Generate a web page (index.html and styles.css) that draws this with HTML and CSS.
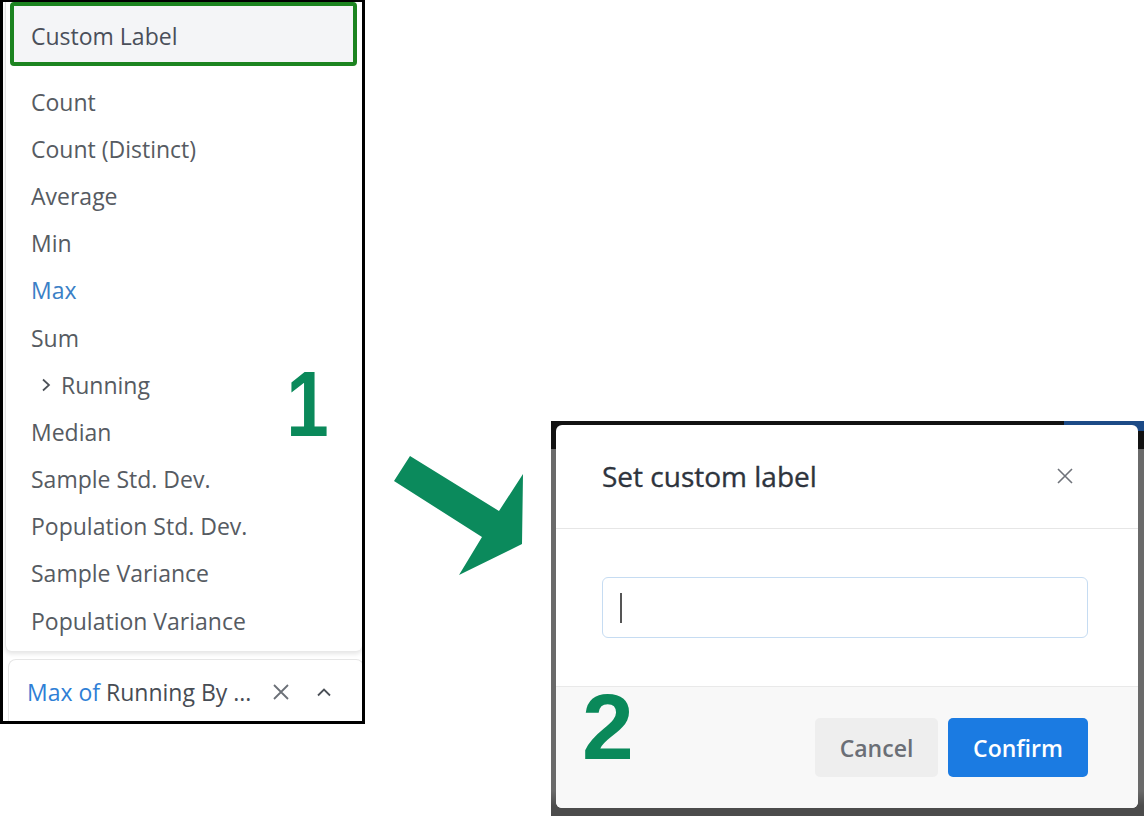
FILE: index.html
```html
<!DOCTYPE html>
<html>
<head>
<meta charset="utf-8">
<link rel="stylesheet" href="styles.css">
</head>
<body>
<div class="canvas">
  <div class="shot1">
    <div class="card">
      <div class="sel">Custom Label</div>
      <ul class="items">
        <li>Count</li>
        <li>Count (Distinct)</li>
        <li>Average</li>
        <li>Min</li>
        <li class="active">Max</li>
        <li>Sum</li>
        <li class="sub"><svg class="chev" width="12" height="18" viewBox="0 0 12 18"><path d="M3 3.5 L9 9 L3 14.5" fill="none" stroke="#4b5057" stroke-width="1.7"/></svg>Running</li>
        <li>Median</li>
        <li>Sample Std. Dev.</li>
        <li>Population Std. Dev.</li>
        <li>Sample Variance</li>
        <li>Population Variance</li>
      </ul>
    </div>
    <div class="field">
      <span class="ftext"><span class="blue">Max of</span> Running By ...</span>
      <svg class="fx" width="18" height="18" viewBox="0 0 18 18"><path d="M2 2 L16 16 M16 2 L2 16" stroke="#6b7077" stroke-width="1.8" fill="none"/></svg>
      <svg class="fup" width="16" height="10" viewBox="0 0 16 10"><path d="M2 8.5 L8 2.5 L14 8.5" stroke="#4b5057" stroke-width="1.8" fill="none"/></svg>
    </div>
  </div>

  <div class="num num1">1</div>

  <svg class="arrow" width="140" height="130" viewBox="390 450 140 130">
    <polygon points="410,456 499,511 523,474 522,544 459,575 482,537 394,481" fill="#0b8a5c"/>
  </svg>

  <div class="shot2">
    <div class="modal">
      <div class="mhead">
        <span class="mtitle">Set custom label</span>
        <svg class="mclose" width="18" height="18" viewBox="0 0 18 18"><path d="M2 2 L16 16 M16 2 L2 16" stroke="#6f737a" stroke-width="1.6" fill="none"/></svg>
      </div>
      <div class="mbody">
        <div class="input"><span class="caret"></span></div>
      </div>
      <div class="mfoot">
        <button class="btn cancel">Cancel</button>
        <button class="btn confirm">Confirm</button>
      </div>
    </div>
  </div>

  <div class="num num2">2</div>
</div>
</body>
</html>
```

FILE: styles.css
```css
* { box-sizing: border-box; }
html, body { margin: 0; padding: 0; background: #fff; }
body { font-family: "Open Sans", "Noto Sans", sans-serif; }

.canvas {
  position: relative;
  width: 1144px;
  height: 835px;
  overflow: hidden;
  background: #fff;
}

/* ---------- left screenshot ---------- */
.shot1 {
  position: absolute;
  left: 0;
  top: 0;
  width: 365px;
  height: 724px;
  border: 3px solid #000;
  border-top-width: 2px;
  background: #fff;
  overflow: hidden;
  display: flex;
  flex-direction: column;
}
.card {
  margin-left: 2px;
  width: 357px;
  height: 649px;
  border-left: 1px solid #e4e4e4;
  border-bottom-left-radius: 6px;
  border-bottom-right-radius: 6px;
  box-shadow: 0 3px 4px rgba(0, 0, 0, 0.10);
  background: #fff;
  display: flex;
  flex-direction: column;
}
.sel {
  margin-left: 4px;
  width: 347px;
  height: 64px;
  border: 4px solid #1c8420;
  border-radius: 4px;
  background: #f4f5f7;
  padding-left: 17px;
  padding-top: 5px;
  font-size: 23px;
  line-height: 51px;
  color: #4a4f5a;
}
.items {
  list-style: none;
  margin: 12.5px 0 0 0;
  padding: 0;
}
.items li {
  height: 47.2px;
  line-height: 47px;
  padding-left: 25px;
  font-size: 23px;
  color: #565b62;
  display: flex;
  align-items: center;
}
.items li.active { color: #3a80c6; }
.items li.sub { padding-left: 34px; }
.chev { margin-right: 9px; }

.field {
  margin-top: 8px;
  margin-left: 5px;
  width: 356px;
  flex: 1;
  border: 1px solid #e6e6e6;
  border-bottom: none;
  border-radius: 8px 8px 0 0;
  display: flex;
  align-items: center;
  padding-left: 18px;
  padding-top: 2px;
  font-size: 23px;
  color: #474c54;
}
.ftext { white-space: nowrap; }
.blue { color: #2f7fd6; }
.fx { margin-left: 21px; }
.fup { margin-left: 26px; }

/* ---------- numbers & arrow ---------- */
.num {
  position: absolute;
  font-family: "Liberation Sans", Arial, sans-serif;
  font-weight: 700;
  font-size: 93px;
  line-height: 93px;
  color: #0a895a;
}
.num1 { left: 282px; top: 358px; transform: scaleX(0.82); transform-origin: 24px 0; }
.num2 { left: 582px; top: 681px; }

.arrow {
  position: absolute;
  left: 390px;
  top: 450px;
}

/* ---------- right screenshot ---------- */
.shot2 {
  position: absolute;
  left: 551px;
  top: 421px;
  width: 593px;
  height: 395px;
  background: linear-gradient(to bottom, #121212 0, #121212 28px, #6a6a6a 28px, #6a6a6a 370px, #4c4c4c 385px);
  padding: 4px 6px 0 5px;
}
.shot2::before {
  content: "";
  position: absolute;
  right: 0;
  top: 0;
  width: 80px;
  height: 10px;
  background: #1c4a86;
}
.modal {
  position: relative;
  width: 582px;
  height: 383px;
  background: #fff;
  border-radius: 6px;
  overflow: hidden;
  display: flex;
  flex-direction: column;
}
.mhead {
  height: 104px;
  border-bottom: 1px solid #e6e6e6;
  display: flex;
  align-items: center;
  justify-content: space-between;
  padding: 0 64px 2px 46px;
}
.mtitle {
  font-size: 28px;
  font-weight: 500;
  color: #2e343d;
  -webkit-text-stroke: 0.35px #2e343d;
}
.mbody {
  padding: 48px 50px 48px 46px;
}
.input {
  height: 61px;
  border: 1.5px solid #c6dcf2;
  border-radius: 6px;
  display: flex;
  align-items: center;
  padding-left: 17px;
}
.caret {
  width: 2px;
  height: 30px;
  background: #555;
}
.mfoot {
  flex: 1;
  background: #f8f8f8;
  border-top: 1px solid #e9e9e9;
  display: flex;
  justify-content: flex-end;
  align-items: flex-start;
  gap: 10px;
  padding: 31px 50px 0 0;
}
.btn {
  height: 59px;
  border: none;
  border-radius: 5px;
  font-family: "Open Sans", "Noto Sans", sans-serif;
  font-size: 23px;
  font-weight: 600;
  padding: 0;
}
.cancel {
  width: 123px;
  background: #eeeeee;
  color: #6b6f76;
}
.confirm {
  width: 140px;
  background: #1b7be2;
  color: #fff;
}
```
